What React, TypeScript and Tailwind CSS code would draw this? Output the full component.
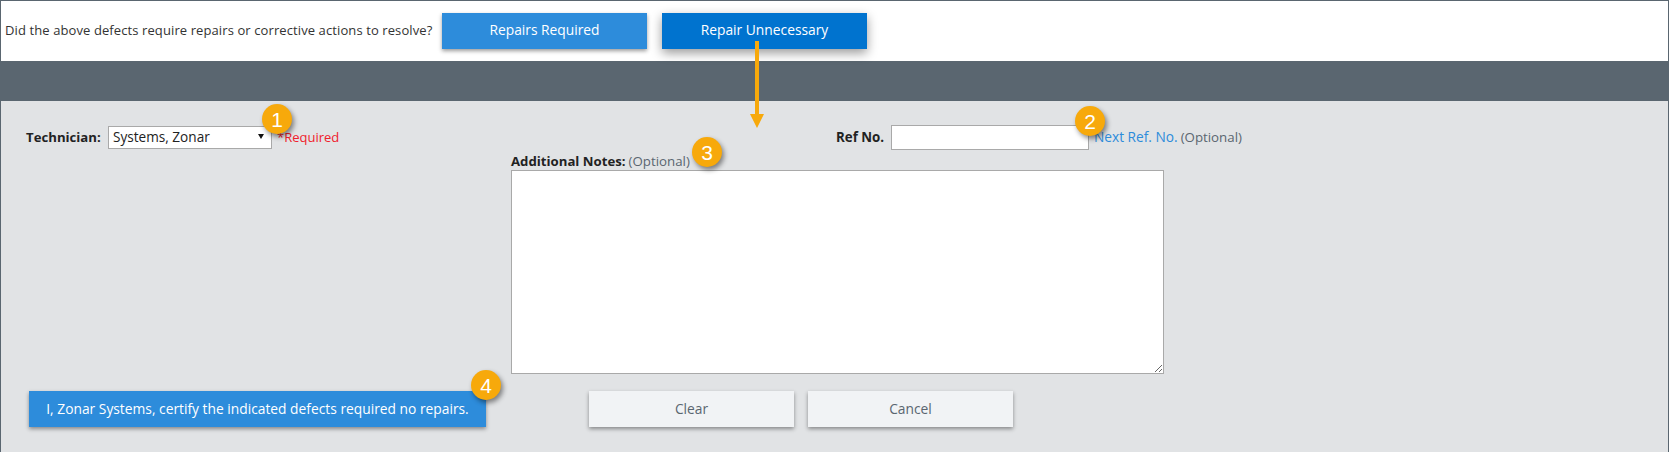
const font = "font-['Open_Sans',sans-serif]";

function Badge({ n, className }: { n: number; className: string }) {
  return (
    <span
      className={`absolute flex h-[30px] w-[30px] items-center justify-center rounded-full bg-[#f7a90b] font-['Liberation_Sans',sans-serif] text-[21px] leading-none text-white shadow-[2px_3px_5px_rgba(0,0,0,0.45)] ${className}`}
    >
      {n}
    </span>
  );
}

function ActionButton({
  label,
  className,
}: {
  label: string;
  className: string;
}) {
  return (
    <button
      className={`h-9 text-[13.8px] shadow-[0_2px_4px_rgba(0,0,0,0.4)] ${className}`}
    >
      {label}
    </button>
  );
}

export default function App() {
  return (
    <div
      className={`${font} relative h-[452px] w-full overflow-hidden border-x border-t border-[#5a6670] bg-[#e1e3e5] text-[13px] text-[#222]`}
    >
      <header className="flex h-[60px] items-center bg-white pb-[1px] pl-[4px]">
        <span className="w-[437px] text-[13px] tracking-[0.1px] text-[#333]">
          Did the above defects require repairs or corrective actions to resolve?
        </span>
        <div className="flex gap-[15px]">
          <ActionButton label="Repairs Required" className="w-[205px] bg-[#2d8cdb] text-white" />
          <ActionButton
            label="Repair Unnecessary"
            className="w-[205px] bg-[#0073cf] text-white shadow-[0_4px_10px_rgba(0,0,0,0.4)]"
          />
        </div>
      </header>
      <div className="h-10 bg-[#5a6670]" />

      <main className="pt-[24px]">
        <div className="flex h-[25px] items-center">
          <label className="ml-[25px] w-[82px] text-[13.2px] font-bold">Technician:</label>
          <div className="relative h-[23px] w-[164px]">
            <select className="h-full w-full appearance-none border border-[#a9a9a9] bg-white pl-[4px] text-[13.6px] text-[#222]">
              <option>Systems, Zonar</option>
            </select>
            <svg className="absolute right-[8px] top-[8px]" width="6" height="5" viewBox="0 0 6 5">
              <path d="M0 0h6L3 5z" fill="#111" />
            </svg>
          </div>
          <span className="ml-[5px] w-[559px] text-[13px] text-[#f0202c]">*Required</span>
          <label className="w-[55px] text-[13.3px] font-bold">Ref No.</label>
          <input className="h-[25px] w-[198px] border border-[#a9a9a9] bg-white" />
          <a className="ml-[5px] text-[13.7px] text-[#2d8cdb]">Next Ref. No.</a>
          <span className="ml-[3px] text-[13.3px] text-[#5a6670]">(Optional)</span>
        </div>

        <div className="ml-[510px] mt-[3px] w-[653px]">
          <div className="flex h-[17px] items-center">
            <label className="text-[13.2px] font-bold">Additional Notes:</label>
            <span className="ml-[3px] text-[13.3px] text-[#5a6670]">(Optional)</span>
          </div>
          <textarea className="block h-[204px] w-full border border-[#a9a9a9] bg-white" />
        </div>

        <div className="mt-[17px] flex">
          <ActionButton
            label="I, Zonar Systems, certify the indicated defects required no repairs."
            className="ml-[28px] w-[457px] bg-[#2d8cdb] text-white"
          />
          <ActionButton label="Clear" className="ml-[103px] w-[205px] bg-[#f1f3f5] text-[#5a6670]" />
          <ActionButton label="Cancel" className="ml-[14px] w-[205px] bg-[#f1f3f5] text-[#5a6670]" />
        </div>
      </main>

      <svg className="absolute left-[748px] top-[40px]" width="16" height="88" viewBox="0 0 16 88">
        <path d="M6 0h4v73h5L8 87 1 73h5z" fill="#f7a90b" />
      </svg>

      <Badge n={1} className="left-[261px] top-[103px]" />
      <Badge n={2} className="left-[1074px] top-[105px]" />
      <Badge n={3} className="left-[691px] top-[136px]" />
      <Badge n={4} className="left-[470px] top-[369px]" />
    </div>
  );
}
